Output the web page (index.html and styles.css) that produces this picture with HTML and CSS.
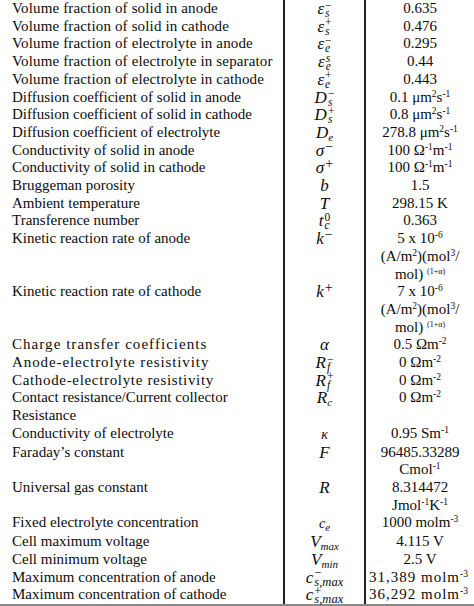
FILE: index.html
```html
<!DOCTYPE html>
<html>
<head>
<meta charset="utf-8">
<link rel="stylesheet" href="styles.css">
</head>
<body>
<table class="params">
<colgroup><col class="c1"><col class="c2"><col class="c3"></colgroup>
<tbody>
<tr><td class="n w1">Volume fraction of solid in anode</td><td class="s"><i>ε</i><span class="ss"><span>−</span><span><i>s</i></span></span></td><td class="v">0.635</td></tr>
<tr><td class="n w1">Volume fraction of solid in cathode</td><td class="s"><i>ε</i><span class="ss"><span>+</span><span><i>s</i></span></span></td><td class="v">0.476</td></tr>
<tr><td class="n w1">Volume fraction of electrolyte in anode</td><td class="s"><i>ε</i><span class="ss"><span>−</span><span><i>e</i></span></span></td><td class="v">0.295</td></tr>
<tr><td class="n w1">Volume fraction of electrolyte in separator</td><td class="s"><i>ε</i><span class="ss"><span><i>s</i></span><span><i>e</i></span></span></td><td class="v">0.44</td></tr>
<tr><td class="n w1">Volume fraction of electrolyte in cathode</td><td class="s"><i>ε</i><span class="ss"><span>+</span><span><i>e</i></span></span></td><td class="v">0.443</td></tr>
<tr><td class="n">Diffusion coefficient of solid in anode</td><td class="s"><i>D</i><span class="ss"><span>−</span><span><i>s</i></span></span></td><td class="v">0.1 μm<sup>2</sup>s<sup>-1</sup></td></tr>
<tr><td class="n">Diffusion coefficient of solid in cathode</td><td class="s"><i>D</i><span class="ss"><span>+</span><span><i>s</i></span></span></td><td class="v">0.8 μm<sup>2</sup>s<sup>-1</sup></td></tr>
<tr><td class="n">Diffusion coefficient of electrolyte</td><td class="s"><i>D</i><sub class="ms"><i>e</i></sub></td><td class="v">278.8 μm<sup>2</sup>s<sup>-1</sup></td></tr>
<tr><td class="n">Conductivity of solid in anode</td><td class="s"><i>σ</i><sup class="mp">−</sup></td><td class="v">100 Ω<sup>-1</sup>m<sup>-1</sup></td></tr>
<tr><td class="n">Conductivity of solid in cathode</td><td class="s"><i>σ</i><sup class="mp">+</sup></td><td class="v">100 Ω<sup>-1</sup>m<sup>-1</sup></td></tr>
<tr><td class="n">Bruggeman porosity</td><td class="s"><i>b</i></td><td class="v">1.5</td></tr>
<tr><td class="n">Ambient temperature</td><td class="s"><i>T</i></td><td class="v">298.15 K</td></tr>
<tr><td class="n">Transference number</td><td class="s"><i>t</i><span class="ss"><span>0</span><span><i>c</i></span></span></td><td class="v">0.363</td></tr>
<tr><td class="n">Kinetic reaction rate of anode</td><td class="s"><i>k</i><sup class="mp">−</sup></td><td class="v">5 x 10<sup>-6</sup><br>(A/m<sup>2</sup>)(mol<sup>3</sup>/<br>mol) <sup class="tiny">(1+α)</sup></td></tr>
<tr><td class="n">Kinetic reaction rate of cathode</td><td class="s"><i>k</i><sup class="mp">+</sup></td><td class="v">7 x 10<sup>-6</sup><br>(A/m<sup>2</sup>)(mol<sup>3</sup>/<br>mol) <sup class="tiny">(1+α)</sup></td></tr>
<tr><td class="n wc">Charge transfer coefficients</td><td class="s"><i>α</i></td><td class="v">0.5 Ωm<sup>-2</sup></td></tr>
<tr><td class="n wa">Anode-electrolyte resistivity</td><td class="s"><i>R</i><span class="ss"><span>−</span><span><i>f</i></span></span></td><td class="v">0 Ωm<sup>-2</sup></td></tr>
<tr><td class="n wk">Cathode-electrolyte resistivity</td><td class="s"><i>R</i><span class="ss"><span>+</span><span><i>f</i></span></span></td><td class="v">0 Ωm<sup>-2</sup></td></tr>
<tr><td class="n">Contact resistance/Current collector<br>Resistance</td><td class="s"><i>R</i><sub class="ms"><i>c</i></sub></td><td class="v">0 Ωm<sup>-2</sup></td></tr>
<tr><td class="n">Conductivity of electrolyte</td><td class="s"><i class="sm">κ</i></td><td class="v">0.95 Sm<sup>-1</sup></td></tr>
<tr><td class="n">Faraday’s constant</td><td class="s"><i>F</i></td><td class="v">96485.33289<br>Cmol<sup>-1</sup></td></tr>
<tr><td class="n">Universal gas constant</td><td class="s"><i>R</i></td><td class="v">8.314472<br>Jmol<sup>-1</sup>K<sup>-1</sup></td></tr>
<tr><td class="n">Fixed electrolyte concentration</td><td class="s"><i class="sm">c</i><sub class="ms"><i>e</i></sub></td><td class="v">1000 molm<sup>-3</sup></td></tr>
<tr><td class="n">Cell maximum voltage</td><td class="s"><i>V</i><sub class="ms"><i>max</i></sub></td><td class="v">4.115 V</td></tr>
<tr><td class="n">Cell minimum voltage</td><td class="s"><i>V</i><sub class="ms"><i>min</i></sub></td><td class="v">2.5 V</td></tr>
<tr><td class="n">Maximum concentration of anode</td><td class="s"><i>c</i><span class="ss big"><span>−</span><span><i>s,max</i></span></span></td><td class="v left">31,389 molm<sup>-3</sup></td></tr>
<tr class="last"><td class="n">Maximum concentration of cathode</td><td class="s"><i>c</i><span class="ss big"><span>+</span><span><i>s,max</i></span></span></td><td class="v left">36,292 molm<sup>-3</sup></td></tr>
</tbody>
</table>
<div class="shade"></div>
</body>
</html>
```

FILE: styles.css
```css
html, body {
  margin: 0;
  padding: 0;
  background: #ffffff;
}

body {
  color: #0c0c0c;
  font-family: "Liberation Serif", "Times New Roman", serif;
  font-size: 15px;
}

.params {
  border-collapse: collapse;
  table-layout: fixed;
  width: 474px;
}

.c1 { width: 284px; }
.c2 { width: 81px; }
.c3 { width: 109px; }

.params td {
  padding: 0;
  line-height: 17.7px;
  vertical-align: top;
  white-space: nowrap;
}

.params td.n {
  padding-left: 12px;
}

.w1 { letter-spacing: 0.15px; }
.wc { letter-spacing: 1.05px; }
.wa { letter-spacing: 0.9px; }
.wk { letter-spacing: 0.67px; }

.params td.s {
  text-align: center;
  border-left: 2px solid #202020;
  font-size: 17px;
}

.params td.v {
  text-align: center;
  border-left: 2px solid #202020;
}

.params td.v.left {
  text-align: left;
  padding-left: 3px;
  letter-spacing: 1px;
}

.params tr.last td {
  border-bottom: 3px solid #8a8a8a;
}

.shade {
  height: 6px;
  background: #c8c8c8;
}

.params sup {
  font-size: 9.5px;
  line-height: 0;
  vertical-align: 5px;
  letter-spacing: 0;
}

.params sup.tiny {
  font-size: 8px;
}

.ss {
  display: inline-block;
  vertical-align: -3px;
  margin: -3px 0 -3px 1px;
  font-size: 11.5px;
  line-height: 8.5px;
  text-align: left;
}

.ss > span {
  display: block;
}

.ss.big {
  font-size: 12.5px;
  line-height: 8.5px;
}

.params sub.ms {
  font-size: 11px;
  line-height: 0;
  vertical-align: -3px;
}

.params sup.mp {
  font-size: 14px;
  vertical-align: 5px;
  margin-left: 1px;
}

.sm {
  font-size: 14px;
}
```
